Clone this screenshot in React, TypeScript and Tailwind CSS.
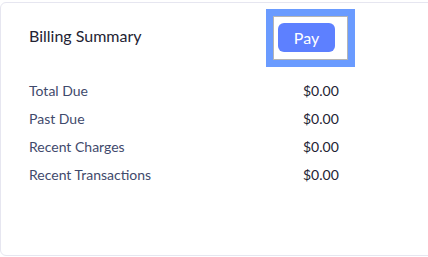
const rows = [
  { label: "Total Due", value: "$0.00" },
  { label: "Past Due", value: "$0.00" },
  { label: "Recent Charges", value: "$0.00" },
  { label: "Recent Transactions", value: "$0.00" },
];

export default function App() {
  return (
    <div className="h-[257px] w-[428px] overflow-hidden bg-white pt-[2px] font-['Lato',sans-serif]">
      <div className="h-[254px] w-[460px] rounded-md border border-[#e6e6f0] bg-white">
        <div className="flex items-center pt-[6px]">
          <h2 className="w-[265px] pl-[28px] pb-[5px] text-[16px] font-normal text-[#232333]">
            Billing Summary
          </h2>
          <div className="border-[7px] border-[#6a9bff]">
            <div className="border border-[#b5b5b5] bg-white pl-[4px] pr-[12px] pt-[6px] pb-[7px]">
              <button className="h-[29px] w-[57px] rounded-md bg-[#5d80ff] text-[16px] text-white">
                Pay
              </button>
            </div>
          </div>
        </div>
        <div className="mt-[9px] pl-[28px]">
          {rows.map((r) => (
            <div key={r.label} className="flex h-[28px] items-center text-[14px]">
              <span className="w-[274px] text-[#3f4a6c]">{r.label}</span>
              <span className="text-[#232333]">{r.value}</span>
            </div>
          ))}
        </div>
      </div>
    </div>
  );
}
